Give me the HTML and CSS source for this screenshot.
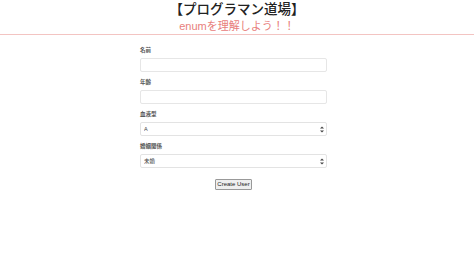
FILE: index.html
```html
<!DOCTYPE html>
<html lang="ja">
<head>
<meta charset="utf-8">
<title>プログラマン道場</title>
<link rel="stylesheet" href="styles.css">
</head>
<body>
<header class="header">
  <h1 class="title">【プログラマン道場】</h1>
  <p class="subtitle">enumを理解しよう！！</p>
</header>
<form class="form">
  <div class="field">
    <label class="label">名前</label>
    <input class="input" type="text">
  </div>
  <div class="field">
    <label class="label">年齢</label>
    <input class="input" type="text">
  </div>
  <div class="field">
    <label class="label">血液型</label>
    <div class="select-wrap">
      <select class="select"><option>A</option></select>
      <svg class="arrows" width="4" height="7" viewBox="0 0 4 7"><path d="M0 2.6 L2 0.4 L4 2.6 Z M0 4.4 L2 6.6 L4 4.4 Z" fill="#444"/></svg>
    </div>
  </div>
  <div class="field">
    <label class="label">婚姻関係</label>
    <div class="select-wrap">
      <select class="select"><option>未婚</option></select>
      <svg class="arrows" width="4" height="7" viewBox="0 0 4 7"><path d="M0 2.6 L2 0.4 L4 2.6 Z M0 4.4 L2 6.6 L4 4.4 Z" fill="#444"/></svg>
    </div>
  </div>
  <div class="actions">
    <button class="button" type="button">Create User</button>
  </div>
</form>
</body>
</html>
```
FILE: styles.css
```css
html, body {
  margin: 0;
  padding: 0;
  background: #fff;
}
body {
  font-family: "Liberation Sans", "Noto Sans CJK JP", sans-serif;
  color: #222;
}
.header {
  text-align: center;
  border-bottom: 1px solid #f3c4c2;
}
.title {
  margin: 0;
  font-size: 13.5px;
  line-height: 19px;
  font-weight: 500;
  color: #222;
}
.subtitle {
  margin: 0;
  font-size: 11px;
  line-height: 15px;
  color: #e8807c;
}
.form {
  width: 187px;
  margin: 0 0 0 calc(50% - 97px);
  padding-top: 11px;
}
.field {
  margin-bottom: 6px;
}
.label {
  display: block;
  font-size: 5.5px;
  line-height: 9px;
  font-weight: bold;
  color: #555;
  margin-bottom: 3px;
}
.input {
  display: block;
  box-sizing: border-box;
  width: 100%;
  height: 14px;
  margin: 0;
  padding: 0 3px;
  border: 1px solid #e6e6e6;
  border-radius: 2px;
  background: #fff;
  font-size: 6px;
}
.select-wrap {
  position: relative;
}
.select {
  display: block;
  box-sizing: border-box;
  width: 100%;
  height: 14px;
  margin: 0;
  padding: 0 3px;
  border: 1px solid #e3e3e3;
  border-radius: 2px;
  background: #fff;
  font-family: "Liberation Sans", "Noto Sans CJK JP", sans-serif;
  font-size: 5.5px;
  color: #444;
  appearance: none;
  -webkit-appearance: none;
}
.arrows {
  position: absolute;
  right: 3px;
  top: 3.5px;
}
.actions {
  display: flex;
  justify-content: center;
  padding-top: 5px;
}
.button {
  font-family: "Liberation Sans", sans-serif;
  font-size: 6px;
  line-height: 9px;
  padding: 0 1.5px;
  margin: 0;
  border: 1px solid #999;
  border-radius: 1px;
  background: #efefef;
  color: #222;
}
```
